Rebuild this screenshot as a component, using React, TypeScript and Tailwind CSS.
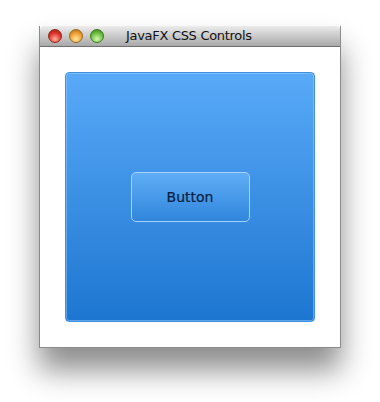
export default function App() {
  return (
    <div className="w-[380px] h-[402px] bg-white pl-[39px] pt-[26px] font-['DejaVu_Sans',sans-serif]">
      <div className="w-[302px] shadow-[0_22px_28px_rgba(0,0,0,0.45)] border border-[#8a8a8a] border-t-0">
        {/* title bar */}
        <div className="relative h-[21px] flex items-center bg-gradient-to-b from-[#ececec] to-[#a9a9a9] border-b border-[#6f6f6f] rounded-t-[4px]">
          <div className="flex items-center gap-[7px] pl-[8px]">
            <span className="w-[14px] h-[14px] rounded-full bg-[radial-gradient(circle_at_50%_75%,#ffb0a0,#e0322a_55%,#9a1c14)] border border-[#8a2a20]" />
            <span className="w-[14px] h-[14px] rounded-full bg-[radial-gradient(circle_at_50%_75%,#ffe8a0,#f0a030_55%,#a86410)] border border-[#9a6a20]" />
            <span className="w-[14px] h-[14px] rounded-full bg-[radial-gradient(circle_at_50%_75%,#d8f8b0,#6cc040_55%,#3a7a1c)] border border-[#3f7a20]" />
          </div>
          <span className="ml-[22px] text-[13px] text-[#111] font-['DejaVu_Sans',sans-serif] tracking-[-0.3px]">JavaFX CSS Controls</span>
        </div>
        {/* content */}
        <div className="bg-white p-[25px] h-[300px]">
          <div className="w-[250px] h-[250px] rounded-[4px] border border-[#3f8fe0] bg-gradient-to-b from-[#58aaf8] to-[#1c76d0] shadow-[inset_0_0_0_1px_rgba(160,210,255,0.5)] flex items-center justify-center">
            <button className="w-[119px] h-[50px] rounded-[5px] border border-[#a6d2fb] bg-gradient-to-b from-[#5fadf6] to-[#2f86dc] text-[14px] text-[#081f40] font-['DejaVu_Sans',sans-serif] [-webkit-text-stroke:0.2px_#081f40]">
              Button
            </button>
          </div>
        </div>
      </div>
    </div>
  );
}
